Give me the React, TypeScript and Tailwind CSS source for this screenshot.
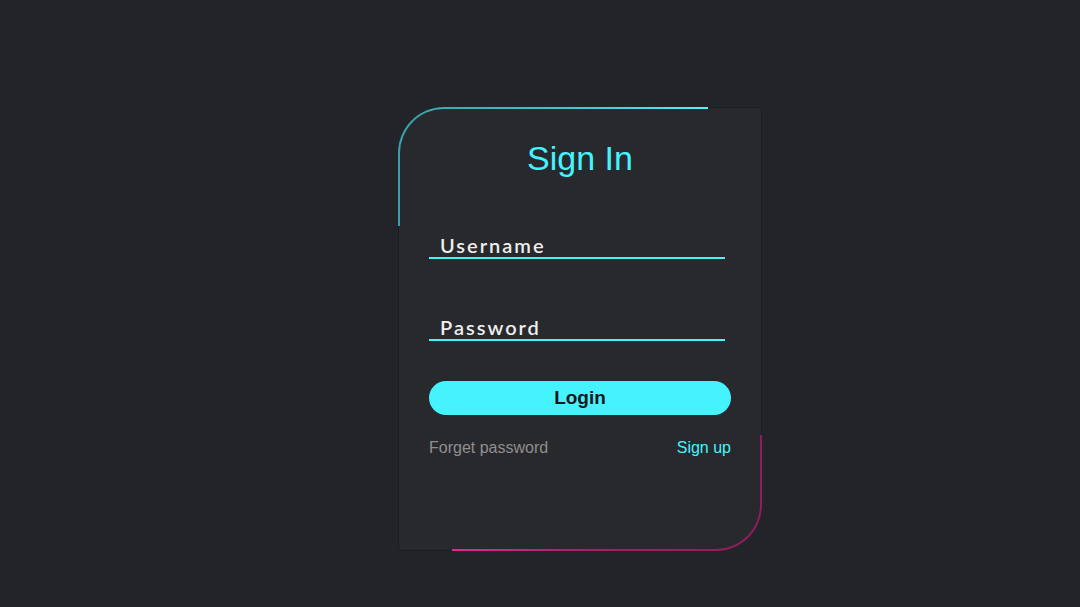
import React from 'react';

function Field({ label }: { label: string }) {
  return (
    <div className="w-[296px]">
      <div className="pl-[11px] text-[20px] leading-[24px] tracking-[0.1em] font-semibold text-[#eeeeee] font-['Lato','Open_Sans',sans-serif]">
        {label}
      </div>
      <div className="h-[2px] bg-[#45f3ff]" />
    </div>
  );
}

export default function App() {
  return (
    <div className="min-h-screen w-full bg-[#232429] pl-[398px] pt-[107px] font-['Liberation_Sans',Arial,sans-serif]">
      <div className="relative w-[364px] h-[444px] bg-[#28292d] border border-[#1c1d21] rounded-tl-[46px] rounded-br-[46px] rounded-tr-[4px] rounded-bl-[4px]">
        {/* cyan corner */}
        <div className="absolute -top-px -left-px w-[310px] h-[119px] rounded-tl-[46px] bg-[linear-gradient(to_right,#37a2aa,#3fcbd5_60%,#4ef4fe)]">
          <div className="absolute top-[2px] left-[2px] right-0 bottom-0 rounded-tl-[44px] bg-[#28292d]" />
        </div>
        {/* pink corner */}
        <div className="absolute -bottom-px -right-px w-[310px] h-[116px] rounded-br-[46px] bg-[linear-gradient(to_left,#8f1c5d,#a61f69_55%,#e02a92)]">
          <div className="absolute top-0 left-0 right-[2px] bottom-[2px] rounded-br-[44px] bg-[#28292d]" />
        </div>

        <div className="relative flex flex-col items-center">
          <h2 className="mt-[30px] text-[34px] leading-[40px] font-normal text-[#45f3ff]">Sign In</h2>

          <div className="mt-[55px] w-[302px] flex flex-col">
            <Field label="Username" />
            <div className="mt-[56px]">
              <Field label="Password" />
            </div>
            <button className="mt-[40px] h-[34px] w-[302px] rounded-full bg-[#45f3ff] text-[19px] font-bold text-[#16171b]">
              Login
            </button>
            <div className="mt-[24px] flex justify-between text-[16px] leading-[18px]">
              <span className="text-[#8f8f8f]">Forget password</span>
              <span className="text-[#45f3ff]">Sign up</span>
            </div>
          </div>
        </div>
      </div>
    </div>
  );
}
